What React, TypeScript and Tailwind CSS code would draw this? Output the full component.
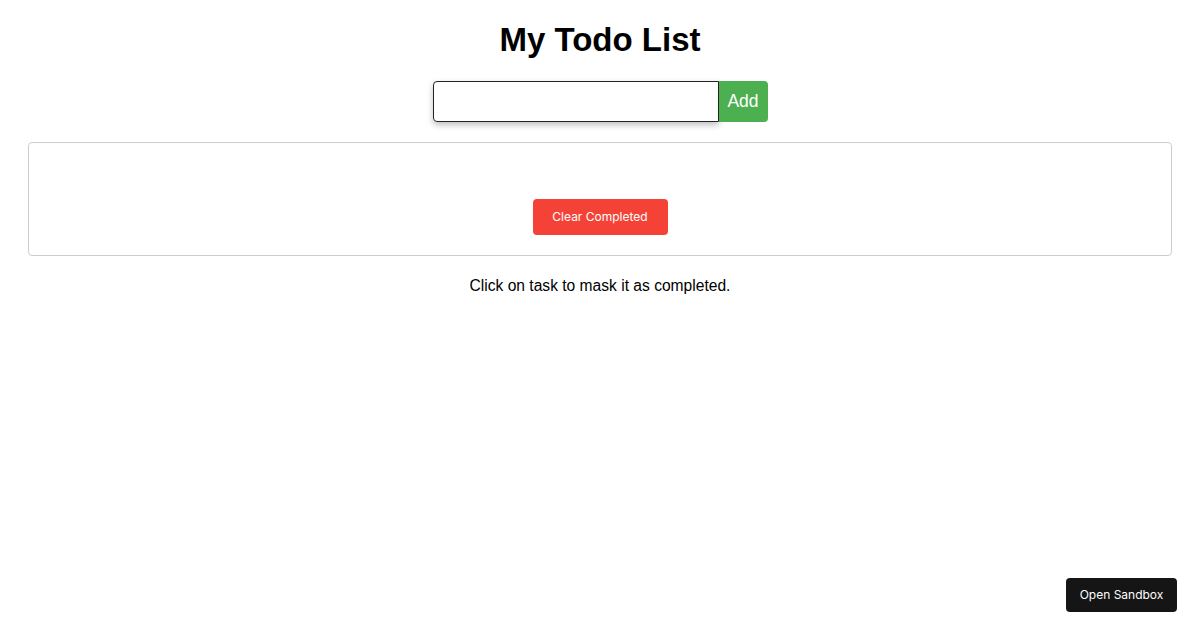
import React from "react";

export default function App() {
  return (
    <div className="min-h-screen bg-white font-['Liberation_Sans',Arial,sans-serif] text-black">
      <div className="px-[28px] pt-[22px] flex flex-col items-center">
        <h1 className="text-[33px] leading-[36px] font-bold">My Todo List</h1>

        <div className="mt-[23px] flex">
          <input
            type="text"
            className="w-[286px] h-[41px] border border-[#222] rounded-l-[4px] px-2 text-[18px] outline-none shadow-[0_3px_6px_rgba(0,0,0,0.25)]"
          />
          <button className="w-[49px] h-[41px] bg-[#4caf50] text-white text-[17.5px] rounded-r-[4px]">
            Add
          </button>
        </div>

        <div className="mt-[20px] w-full h-[114px] border border-[#cccccc] rounded-[4px] flex flex-col items-center justify-end pb-[20px]">
          <button className="w-[135px] h-[36px] bg-[#f44336] text-white rounded-[4px] text-[12px] font-['Inter',sans-serif]">
            Clear Completed
          </button>
        </div>

        <p className="mt-[21px] text-[15.6px] leading-[18px]">Click on task to mask it as completed.</p>
      </div>

      <button className="fixed right-[23px] bottom-[18px] w-[111px] h-[34px] bg-[#151515] text-white text-[12px] rounded-[4px] font-['Inter',sans-serif]">
        Open Sandbox
      </button>
    </div>
  );
}
